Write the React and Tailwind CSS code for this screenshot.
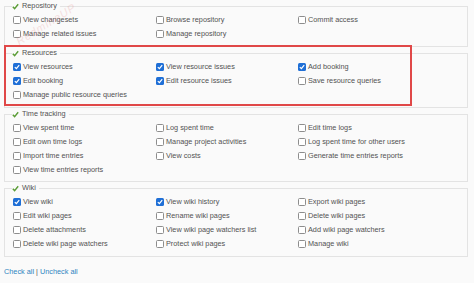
const sections = [
    {
        title: 'Repository',
        pb: 'pb-[5px]',
        items: [
            ['View changesets', false],
            ['Browse repository', false],
            ['Commit access', false],
            ['Manage related issues', false],
            ['Manage repository', false],
        ],
    },
    {
        title: 'Resources',
        pb: 'pb-[5px]',
        items: [
            ['View resources', true],
            ['View resource issues', true],
            ['Add booking', true],
            ['Edit booking', true],
            ['Edit resource issues', true],
            ['Save resource queries', false],
            ['Manage public resource queries', false],
        ],
    },
    {
        title: 'Time tracking',
        pb: 'pb-[4px]',
        items: [
            ['View spent time', false],
            ['Log spent time', false],
            ['Edit time logs', false],
            ['Edit own time logs', false],
            ['Manage project activities', false],
            ['Log spent time for other users', false],
            ['Import time entries', false],
            ['View costs', false],
            ['Generate time entries reports', false],
            ['View time entries reports', false],
        ],
    },
    {
        title: 'Wiki',
        pb: 'pb-[5px]',
        items: [
            ['View wiki', true],
            ['View wiki history', true],
            ['Export wiki pages', false],
            ['Edit wiki pages', false],
            ['Rename wiki pages', false],
            ['Delete wiki pages', false],
            ['Delete attachments', false],
            ['View wiki page watchers list', false],
            ['Add wiki page watchers', false],
            ['Delete wiki page watchers', false],
            ['Protect wiki pages', false],
            ['Manage wiki', false],
        ],
    },
]

function Box({ checked }) {
    if (checked) {
        return (
            <span className="flex items-center justify-center w-[8px] h-[8px] rounded-[1.5px] bg-[#1f6fd6] shrink-0">
                <svg width="6" height="6" viewBox="0 0 6 6">
                    <path d="M0.8 3.1 L2.4 4.7 L5.2 1.2" fill="none" stroke="#fff" strokeWidth="1.2" />
                </svg>
            </span>
        )
    }
    return <span className="w-[8px] h-[8px] rounded-[1.5px] border border-[#8d8d8d] bg-white shrink-0" />
}

function Tick() {
    return (
        <svg width="7" height="7" viewBox="0 0 7 7" className="mr-[3px]">
            <path d="M0.8 3.8 L2.6 5.6 L6.2 1.2" fill="none" stroke="#5a9c35" strokeWidth="1.4" />
        </svg>
    )
}

export default function App() {
    return (
        <div
            className="relative w-[474px] h-[283px] overflow-hidden bg-[#fafafa] text-[#525252] text-[7.3px]"
            style={{ fontFamily: '"Liberation Sans", Arial, sans-serif' }}
        >
            {sections.map((s) => (
                <fieldset
                    key={s.title}
                    className={`ml-[4px] w-[464px] border border-[#e3e3e3] pl-[8px] ${s.pb}`}
                >
                    <legend className="flex items-center h-[12px] leading-[12px] pr-[3px] -ml-[1px]">
                        <Tick />
                        <span>{s.title}</span>
                    </legend>
                    <div className="grid grid-cols-[143px_142px_1fr] pt-[1px]">
                        {s.items.map(([label, checked]) => (
                            <div key={label} className="flex items-center h-[14px] leading-[14px]">
                                <Box checked={checked} />
                                <span className="ml-[2px] whitespace-nowrap">{label}</span>
                            </div>
                        ))}
                    </div>
                </fieldset>
            ))}

            <div className="mt-[8px] ml-[4px] h-[14px] leading-[14px]">
                <a className="text-[#2e86c1]">Check all</a>
                <span className="text-[#555]"> | </span>
                <a className="text-[#2e86c1]">Uncheck all</a>
            </div>

            {/* highlight drawn over the Resources block */}
            <div className="absolute left-[4px] top-[45px] w-[408px] h-[61px] border-2 border-[#e04848]" />

            {/* faint watermark */}
            <div className="absolute left-[12px] top-[16px] -rotate-[32deg] text-[11px] tracking-[1px] text-[#e07070] opacity-20 italic whitespace-nowrap">
                RedmineUP
            </div>
        </div>
    )
}
